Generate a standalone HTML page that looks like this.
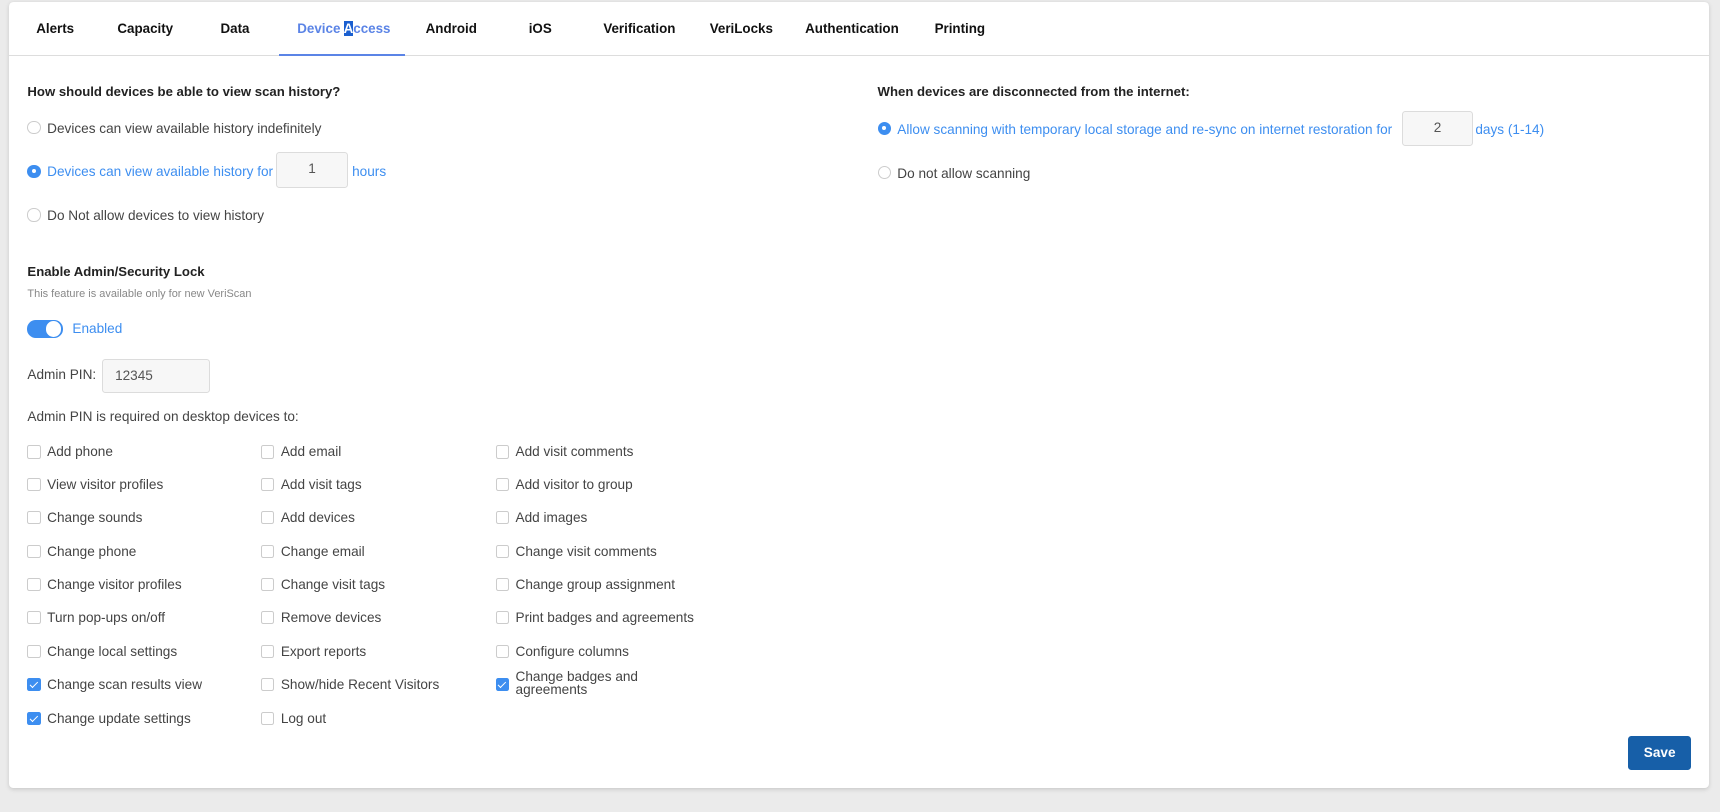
<!DOCTYPE html>
<html><head><meta charset="utf-8"><style>
*{box-sizing:border-box;margin:0;padding:0}
html,body{width:1720px;height:812px;overflow:hidden;background:#ebebeb;font-family:"Liberation Sans",sans-serif}
#w{zoom:1.09694;position:relative;width:1568px;height:740px}
.card{position:absolute;left:8px;top:2px;width:1550px;height:716px;background:#fff;border-radius:4px;box-shadow:0 1px 4px rgba(0,0,0,.15)}
.t{position:absolute;white-space:nowrap;font-size:12.4px;color:#444;line-height:16px;margin-top:1px}
.tab{font-weight:bold;color:#111;top:17px;font-size:12.2px}
.b{font-weight:bold;color:#222;font-size:12px}
.blue{color:#3d8ef0}
.r{position:absolute;width:12px;height:12px;border:1px solid #ccc;border-radius:50%;background:#fff}
.r.on{background:#3d8ef0;border-color:#3d8ef0}
.r.on::after{content:"";position:absolute;left:3px;top:3px;width:4px;height:4px;border-radius:50%;background:#fff}
.in{position:absolute;background:#f7f7f7;border:1px solid #dcdcdc;border-radius:3px;font-size:12.4px;color:#555;line-height:30px}
.c{position:absolute;width:12px;height:12px;border:1px solid #ccc;border-radius:2px;background:#fff}
.c.on{background:#3d8ef0;border-color:#3d8ef0}
.c.on::after{content:"";position:absolute;left:3px;top:1px;width:3px;height:6px;border:solid #fff;border-width:0 1.3px 1.3px 0;transform:rotate(45deg)}
</style></head><body><div id="w">
<div class="card"></div>
<div style="position:absolute;left:8px;top:50px;width:1550px;height:1px;background:#ddd"></div>
<div style="position:absolute;left:254px;top:49px;width:115px;height:2px;background:#5b84e6"></div>
<div class="t tab" style="left:33px">Alerts</div>
<div class="t tab" style="left:107px">Capacity</div>
<div class="t tab" style="left:201px">Data</div>
<div class="t tab" style="left:271px;color:#5b84e6">Device <span style="background:#1a5fd0;color:#fff">A</span>ccess</div>
<div class="t tab" style="left:388px">Android</div>
<div class="t tab" style="left:482px">iOS</div>
<div class="t tab" style="left:550px">Verification</div>
<div class="t tab" style="left:647px">VeriLocks</div>
<div class="t tab" style="left:734px">Authentication</div>
<div class="t tab" style="left:852px">Printing</div>

<div class="t b" style="left:25px;top:75px">How should devices be able to view scan history?</div>
<div class="r" style="left:25px;top:110px"></div><div class="t" style="left:43px;top:108px">Devices can view available history indefinitely</div>
<div class="r on" style="left:25px;top:150px"></div><div class="t blue" style="left:43px;top:148px">Devices can view available history for</div>
<div class="in" style="left:252px;top:139px;width:65px;height:32px;text-align:center">1</div>
<div class="t blue" style="left:321px;top:148px">hours</div>
<div class="r" style="left:25px;top:190px"></div><div class="t" style="left:43px;top:188px">Do Not allow devices to view history</div>

<div class="t b" style="left:800px;top:75px">When devices are disconnected from the internet:</div>
<div class="r on" style="left:800px;top:111px"></div><div class="t blue" style="left:818px;top:109px">Allow scanning with temporary local storage and re-sync on internet restoration for</div>
<div class="in" style="left:1278px;top:101px;width:65px;height:32px;text-align:center">2</div>
<div class="t blue" style="left:1345px;top:109px">days (1-14)</div>
<div class="r" style="left:800px;top:151px"></div><div class="t" style="left:818px;top:149px">Do not allow scanning</div>

<div class="t b" style="left:25px;top:239px">Enable Admin/Security Lock</div>
<div class="t" style="left:25px;top:260px;font-size:10px;color:#888">This feature is available only for new VeriScan</div>
<div style="position:absolute;left:25px;top:292px;width:32px;height:16px;border-radius:8px;background:#3d8ef0"></div>
<div style="position:absolute;left:42px;top:293px;width:14px;height:14px;border-radius:50%;background:#fff"></div>
<div class="t blue" style="left:66px;top:291px">Enabled</div>
<div class="t" style="left:25px;top:333px">Admin PIN:</div>
<div class="in" style="left:93px;top:327px;width:98px;height:31px;padding-left:11px">12345</div>
<div class="t" style="left:25px;top:371px">Admin PIN is required on desktop devices to:</div>

<div class="c" style="left:25px;top:406px"></div><div class="t" style="left:43px;top:403px">Add phone</div>
<div class="c" style="left:238px;top:406px"></div><div class="t" style="left:256px;top:403px">Add email</div>
<div class="c" style="left:452px;top:406px"></div><div class="t" style="left:470px;top:403px">Add visit comments</div>
<div class="c" style="left:25px;top:436px"></div><div class="t" style="left:43px;top:433px">View visitor profiles</div>
<div class="c" style="left:238px;top:436px"></div><div class="t" style="left:256px;top:433px">Add visit tags</div>
<div class="c" style="left:452px;top:436px"></div><div class="t" style="left:470px;top:433px">Add visitor to group</div>
<div class="c" style="left:25px;top:466px"></div><div class="t" style="left:43px;top:463px">Change sounds</div>
<div class="c" style="left:238px;top:466px"></div><div class="t" style="left:256px;top:463px">Add devices</div>
<div class="c" style="left:452px;top:466px"></div><div class="t" style="left:470px;top:463px">Add images</div>
<div class="c" style="left:25px;top:497px"></div><div class="t" style="left:43px;top:494px">Change phone</div>
<div class="c" style="left:238px;top:497px"></div><div class="t" style="left:256px;top:494px">Change email</div>
<div class="c" style="left:452px;top:497px"></div><div class="t" style="left:470px;top:494px">Change visit comments</div>
<div class="c" style="left:25px;top:527px"></div><div class="t" style="left:43px;top:524px">Change visitor profiles</div>
<div class="c" style="left:238px;top:527px"></div><div class="t" style="left:256px;top:524px">Change visit tags</div>
<div class="c" style="left:452px;top:527px"></div><div class="t" style="left:470px;top:524px">Change group assignment</div>
<div class="c" style="left:25px;top:557px"></div><div class="t" style="left:43px;top:554px">Turn pop-ups on/off</div>
<div class="c" style="left:238px;top:557px"></div><div class="t" style="left:256px;top:554px">Remove devices</div>
<div class="c" style="left:452px;top:557px"></div><div class="t" style="left:470px;top:554px">Print badges and agreements</div>
<div class="c" style="left:25px;top:588px"></div><div class="t" style="left:43px;top:585px">Change local settings</div>
<div class="c" style="left:238px;top:588px"></div><div class="t" style="left:256px;top:585px">Export reports</div>
<div class="c" style="left:452px;top:588px"></div><div class="t" style="left:470px;top:585px">Configure columns</div>
<div class="c on" style="left:25px;top:618px"></div><div class="t" style="left:43px;top:615px">Change scan results view</div>
<div class="c" style="left:238px;top:618px"></div><div class="t" style="left:256px;top:615px">Show/hide Recent Visitors</div>
<div class="c on" style="left:452px;top:618px"></div><div class="t" style="left:470px;top:610px;line-height:12px">Change badges and<br>agreements</div>
<div class="c on" style="left:25px;top:649px"></div><div class="t" style="left:43px;top:646px">Change update settings</div>
<div class="c" style="left:238px;top:649px"></div><div class="t" style="left:256px;top:646px">Log out</div>

<div style="position:absolute;left:1484px;top:671px;width:58px;height:31px;background:#175fa8;border-radius:3px;color:#fff;font-weight:bold;font-size:12.4px;line-height:31px;text-align:center">Save</div>
</div></body></html>
